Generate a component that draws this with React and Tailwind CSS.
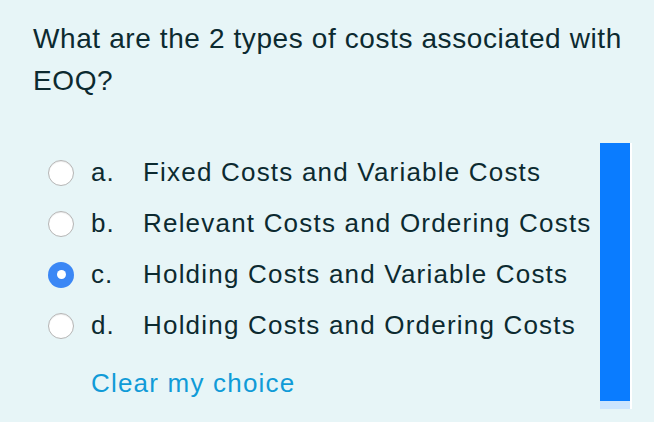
import React from 'react';

const options = [
  { key: 'a', text: 'Fixed Costs and Variable Costs' },
  { key: 'b', text: 'Relevant Costs and Ordering Costs' },
  { key: 'c', text: 'Holding Costs and Variable Costs', checked: true },
  { key: 'd', text: 'Holding Costs and Ordering Costs' },
];

function Radio({ checked }) {
  if (checked) {
    return (
      <span className="w-[26px] h-[26px] rounded-full bg-[#3b87f5] flex items-center justify-center shrink-0">
        <span className="w-[9px] h-[9px] rounded-full bg-white" />
      </span>
    );
  }
  return (
    <span className="w-[26px] h-[26px] rounded-full bg-white border border-[#b5b5b5] shadow-[inset_0_1px_1px_rgba(0,0,0,0.08)] shrink-0" />
  );
}

export default function App() {
  return (
    <div
      className="w-[654px] h-[422px] bg-[#e7f5f7] text-[#0c2a30] overflow-hidden flex flex-col"
      style={{ fontFamily: '"Liberation Sans", Arial, sans-serif' }}
    >
      <p className="pl-[33px] pt-[18px] text-[28px] leading-[42px] tracking-[0.6px] whitespace-nowrap">
        What are the 2 types of costs associated with
        <br />
        EOQ?
      </p>
      <div className="flex">
        <div className="flex-1 pl-[48px] pt-[57px] flex flex-col gap-[24px]">
          {options.map((o) => (
            <div key={o.key} className="flex items-center h-[27px]">
              <Radio checked={o.checked} />
              <span className="ml-[17px] w-[52px] text-[26px] tracking-[1px]">{o.key}.</span>
              <span className="text-[26px] tracking-[1.2px] whitespace-nowrap">{o.text}</span>
            </div>
          ))}
          <div className="pl-[43px] text-[26px] tracking-[1.2px] text-[#109bd7] mt-[1px]">Clear my choice</div>
        </div>
        <div className="pt-[41px] pr-[22px] flex">
          <div className="w-[30px] flex flex-col">
            <div className="h-[258px] bg-[#0a7cff]" />
            <div className="h-[8px] bg-[#cce4fe]" />
          </div>
          <div className="w-[2px] h-[266px] bg-white" />
        </div>
      </div>
    </div>
  );
}
